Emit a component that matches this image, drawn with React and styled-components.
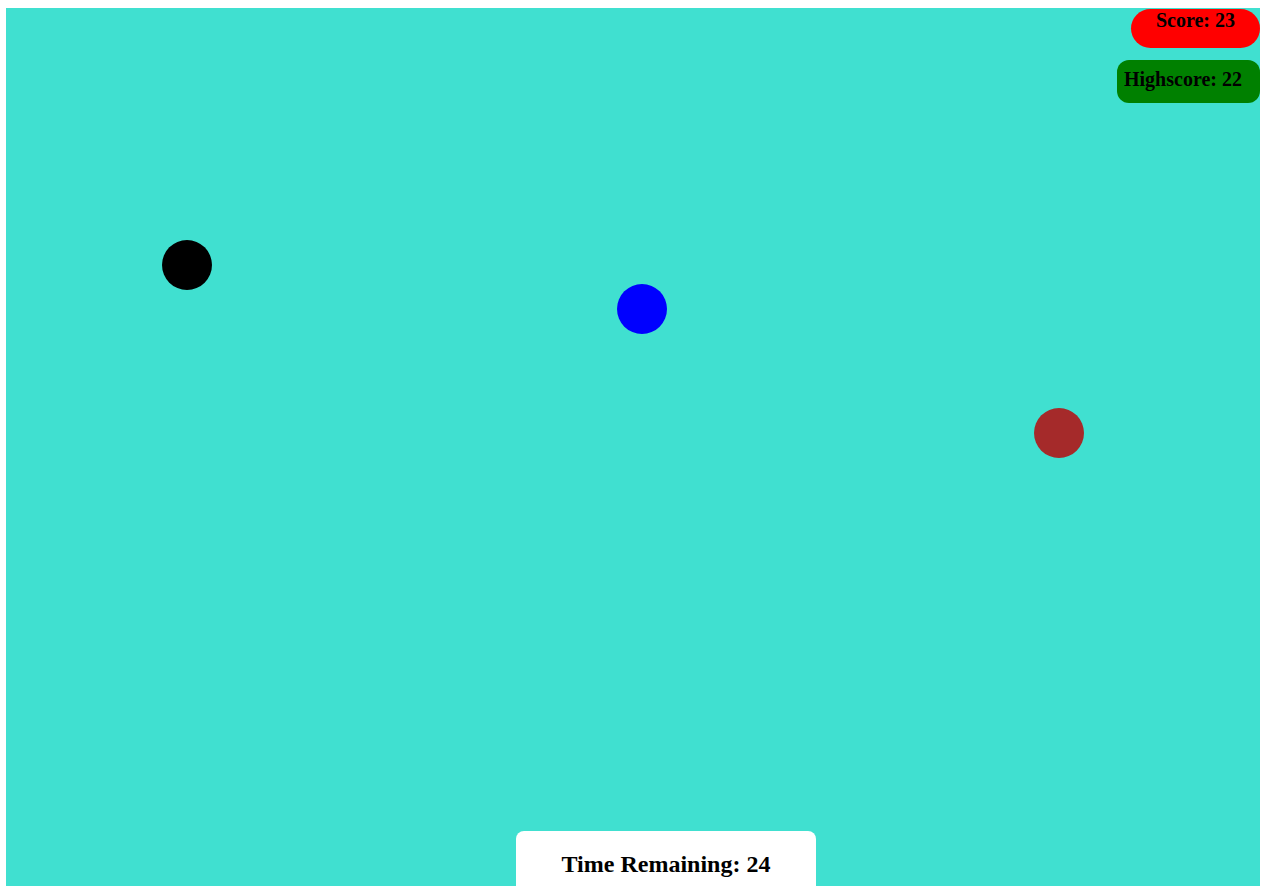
import React from 'react';
import styled, { createGlobalStyle } from 'styled-components';

const GlobalStyle = createGlobalStyle`
html {
  background: #ffffff;
}
body {
  margin: 8px 4px 0 6px;
  font-family: "Liberation Serif", "Times New Roman", serif;
  overflow: hidden;
}
`

const Campo = styled.div`
position: relative;
display: flex;
flex-direction: column;
height: 878px;
background-color: turquoise;
overflow: hidden;
`
const Placar = styled.div`
display: flex;
flex-direction: column;
align-items: flex-end;
gap: 12px;
margin-top: 1px;
`
const Pontos = styled.div`
width: 129px;
height: 39px;
background-color: red;
border-radius: 20px;
text-align: center;
font-size: 20px;
font-weight: bold;
color: black;
`
const Recorde = styled.div`
width: 143px;
height: 43px;
box-sizing: border-box;
padding: 8px 7px 0;
background-color: green;
border-radius: 12px;
font-size: 20px;
font-weight: bold;
color: black;
`
const Bola = styled.div`
position: absolute;
width: 50px;
height: 50px;
border-radius: 50%;
background-color: ${(props) => props.cor};
`
const Tempo = styled.div`
margin-top: auto;
margin-left: 510px;
width: 300px;
height: 55px;
box-sizing: border-box;
padding-top: 20px;
background-color: white;
border-radius: 8px 8px 0 0;
text-align: center;
font-size: 24px;
font-weight: bold;
color: black;
`

const bolas = [
    { id: 1, cor: 'black', x: 156, y: 232 },
    { id: 2, cor: 'blue', x: 611, y: 276 },
    { id: 3, cor: 'brown', x: 1028, y: 400 },
]

export default class App extends React.Component {
    state = {
        score: 23,
        highscore: 22,
        tempo: 24,
    }

    render() {
        const listaBolas = bolas.map((bola) => {
            return <Bola key={bola.id} cor={bola.cor} style={{ left: bola.x, top: bola.y }} />
        })
        return <Campo>
            <GlobalStyle />
            <Placar>
                <Pontos>Score: {this.state.score}</Pontos>
                <Recorde>Highscore: {this.state.highscore}</Recorde>
            </Placar>
            {listaBolas}
            <Tempo>Time Remaining: {this.state.tempo}</Tempo>
        </Campo>
    }
}
